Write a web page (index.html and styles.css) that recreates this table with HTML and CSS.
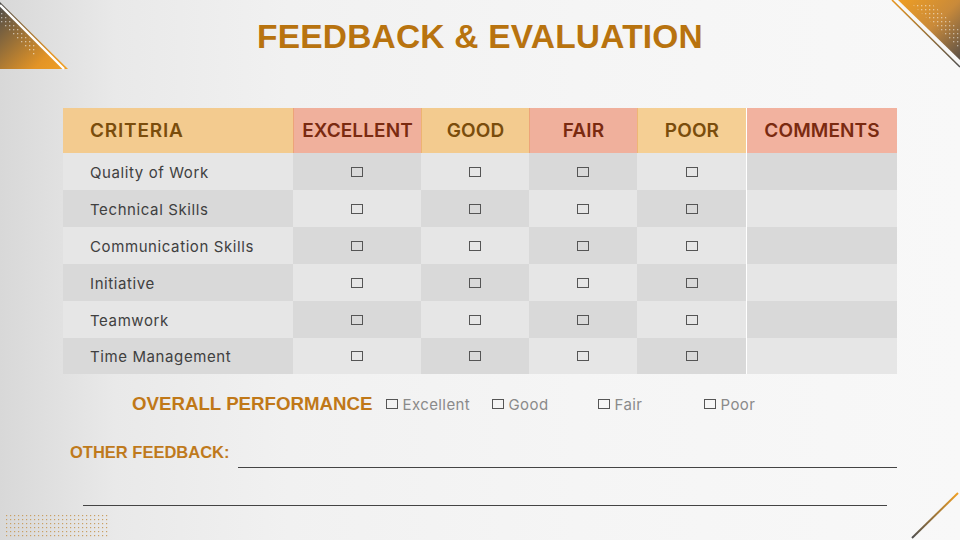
FILE: index.html
```html
<!DOCTYPE html>
<html lang="en">
<head>
<meta charset="utf-8">
<title>Feedback &amp; Evaluation</title>
<link rel="stylesheet" href="styles.css">
</head>
<body>
<div class="slide">
  <svg class="deco deco-tl" width="72" height="72" viewBox="0 0 72 72">
    <defs>
      <linearGradient id="gtl" x1="0" y1="0" x2="1" y2="1">
        <stop offset="0" stop-color="#4a4a4a"/>
        <stop offset="0.75" stop-color="#e39426"/>
        <stop offset="1" stop-color="#f0a024"/>
      </linearGradient>
      <pattern id="dotsW" width="4" height="4" patternUnits="userSpaceOnUse">
        <rect x="1" y="1" width="1.3" height="1.3" fill="#ffffff" opacity="0.55"/>
      </pattern>
    </defs>
    <polygon points="0,2 0,69 68,69" fill="url(#gtl)"/>
    <polygon points="0,9 36,45 36,58 0,22" fill="url(#dotsW)"/>
    <line x1="0" y1="5" x2="64" y2="69" stroke="#ffffff" stroke-width="2.4"/>
  </svg>

  <svg class="deco deco-tr" width="72" height="72" viewBox="0 0 72 72">
    <defs>
      <linearGradient id="gtr" x1="0" y1="0" x2="1" y2="1">
        <stop offset="0" stop-color="#ee9e24"/>
        <stop offset="0.5" stop-color="#c98a3a"/>
        <stop offset="1" stop-color="#5a5048"/>
      </linearGradient>
      <linearGradient id="gtrl" gradientUnits="userSpaceOnUse" x1="4" y1="0" x2="72" y2="68">
        <stop offset="0" stop-color="#e8961e"/>
        <stop offset="1" stop-color="#4e4e4e"/>
      </linearGradient>
      <pattern id="dotsW2" width="4" height="4" patternUnits="userSpaceOnUse">
        <rect x="1" y="1" width="1.3" height="1.3" fill="#ffffff" opacity="0.5"/>
      </pattern>
    </defs>
    <polygon points="10,0 72,0 72,60" fill="url(#gtr)"/>
    <polygon points="24,4 72,50 72,30 44,4" fill="url(#dotsW2)"/>
    <line x1="4" y1="0" x2="72" y2="67" stroke="url(#gtrl)" stroke-width="1.6"/>
  </svg>

  <svg class="deco deco-br" width="55" height="52" viewBox="0 0 55 52">
    <defs>
      <linearGradient id="gbr" gradientUnits="userSpaceOnUse" x1="7" y1="50" x2="53" y2="5">
        <stop offset="0" stop-color="#4e4e4e"/>
        <stop offset="1" stop-color="#f0a024"/>
      </linearGradient>
    </defs>
    <line x1="7" y1="50" x2="53" y2="5" stroke="url(#gbr)" stroke-width="2"/>
  </svg>

  <svg class="deco deco-bl" width="104" height="24" viewBox="0 0 104 24">
    <defs>
      <pattern id="dotsG" width="4" height="4" patternUnits="userSpaceOnUse">
        <rect x="1" y="1" width="1.2" height="1.2" fill="#c9a064"/>
      </pattern>
    </defs>
    <rect x="0" y="0" width="104" height="24" fill="url(#dotsG)"/>
  </svg>

  <h1 class="title">FEEDBACK &amp; EVALUATION</h1>

  <div class="table">
    <div class="th th-criteria hc-amber">CRITERIA</div>
    <div class="th hc-salmon">EXCELLENT</div>
    <div class="th hc-amber">GOOD</div>
    <div class="th hc-salmon">FAIR</div>
    <div class="th hc-amber2">POOR</div>
    <div class="th th-comments hc-salmon2">COMMENTS</div>

    <div class="td label">Quality of Work</div>
    <div class="td dark"><i class="cb"></i></div>
    <div class="td"><i class="cb"></i></div>
    <div class="td dark"><i class="cb"></i></div>
    <div class="td"><i class="cb"></i></div>
    <div class="td comments dark"></div>

    <div class="td label dark">Technical Skills</div>
    <div class="td"><i class="cb"></i></div>
    <div class="td dark"><i class="cb"></i></div>
    <div class="td"><i class="cb"></i></div>
    <div class="td dark"><i class="cb"></i></div>
    <div class="td comments"></div>

    <div class="td label">Communication Skills</div>
    <div class="td dark"><i class="cb"></i></div>
    <div class="td"><i class="cb"></i></div>
    <div class="td dark"><i class="cb"></i></div>
    <div class="td"><i class="cb"></i></div>
    <div class="td comments dark"></div>

    <div class="td label dark">Initiative</div>
    <div class="td"><i class="cb"></i></div>
    <div class="td dark"><i class="cb"></i></div>
    <div class="td"><i class="cb"></i></div>
    <div class="td dark"><i class="cb"></i></div>
    <div class="td comments"></div>

    <div class="td label">Teamwork</div>
    <div class="td dark"><i class="cb"></i></div>
    <div class="td"><i class="cb"></i></div>
    <div class="td dark"><i class="cb"></i></div>
    <div class="td"><i class="cb"></i></div>
    <div class="td comments dark"></div>

    <div class="td label dark">Time Management</div>
    <div class="td"><i class="cb"></i></div>
    <div class="td dark"><i class="cb"></i></div>
    <div class="td"><i class="cb"></i></div>
    <div class="td dark"><i class="cb"></i></div>
    <div class="td comments"></div>
  </div>

  <div class="overall">
    <span class="overall-label">OVERALL PERFORMANCE</span>
    <span class="opt"><i class="ob"></i>Excellent</span>
    <span class="opt"><i class="ob"></i>Good</span>
    <span class="opt"><i class="ob"></i>Fair</span>
    <span class="opt"><i class="ob"></i>Poor</span>
  </div>

  <div class="other">
    <span class="other-label">OTHER FEEDBACK:</span>
    <span class="fill-line"></span>
  </div>
  <div class="line2"></div>
</div>
</body>
</html>
```

FILE: styles.css
```css
* { box-sizing: border-box; }

html, body {
  margin: 0;
  padding: 0;
}

body {
  width: 960px;
  height: 540px;
  overflow: hidden;
  font-family: "Inter", "Liberation Sans", sans-serif;
}

.slide {
  position: relative;
  width: 960px;
  height: 540px;
  overflow: hidden;
  display: flex;
  flex-direction: column;
  background: linear-gradient(90deg, #d8d8d8 0%, #e9e9e9 12%, #f1f1f1 30%, #f5f5f5 60%, #f8f8f8 100%);
}

.deco { position: absolute; display: block; }
.deco-tl { left: 0; top: 0; }
.deco-tr { left: 888px; top: 0; }
.deco-br { left: 905px; top: 488px; }
.deco-bl { left: 5px; top: 514px; }

.title {
  margin: 0;
  padding-top: 17px;
  font-family: "Liberation Sans", Arial, sans-serif;
  font-weight: 700;
  font-size: 33.5px;
  letter-spacing: 0.2px;
  line-height: 40px;
  text-align: center;
  color: #b8730f;
}

.table {
  margin: 51px 0 0 63px;
  width: 834px;
  display: grid;
  grid-template-columns: 230px 128px 108px 108px 109px 151px;
  grid-template-rows: 45px 37px 37px 37px 37px 37px 36px;
}

.th {
  display: flex;
  align-items: center;
  justify-content: center;
  font-family: "Inter", sans-serif;
  font-weight: 600;
  font-size: 19px;
  letter-spacing: 0.1px;
  border-left: 1px solid rgba(232, 150, 80, 0.45);
}
.th-criteria {
  justify-content: flex-start;
  padding-left: 27px;
  border-left: none;
  letter-spacing: 0.8px;
}
.th-comments { border-left: 1px solid #ffffff; }

.hc-amber { background: #f3cb8f; color: #7a4d0c; }
.hc-amber2 { background: #f5cf94; color: #7a4d0c; }
.hc-salmon { background: #f0b09c; color: #7a2a10; }
.hc-salmon2 { background: #f2b29f; color: #7a2a10; }

.td {
  display: flex;
  align-items: center;
  justify-content: center;
  background: #e6e6e6;
}
.td.dark { background: #d9d9d9; }
.td.label {
  justify-content: flex-start;
  padding-left: 27px;
  padding-top: 1px;
  font-size: 15px;
  letter-spacing: 0.6px;
  color: #404040;
}
.td.comments { border-left: 1px solid #ffffff; }

.cb {
  display: block;
  width: 12px;
  height: 10px;
  border: 1.5px solid #555555;
}

.overall {
  margin: 16px 0 0 132px;
  height: 28px;
  display: flex;
  align-items: center;
}
.overall-label {
  font-family: "Liberation Sans", Arial, sans-serif;
  font-weight: 700;
  font-size: 18.7px;
  line-height: 28px;
  color: #c07818;
  margin-right: 13px;
}
.opt {
  width: 106px;
  display: flex;
  align-items: center;
  font-size: 15px;
  letter-spacing: 0.4px;
  color: #8a8a8a;
}
.ob {
  display: block;
  width: 12px;
  height: 10px;
  border: 1px solid #555555;
  margin-right: 5px;
}

.other {
  margin: 24px 0 0 70px;
  width: 827px;
  display: flex;
  align-items: flex-start;
}
.other-label {
  font-family: "Liberation Sans", Arial, sans-serif;
  font-weight: 700;
  font-size: 16.5px;
  line-height: 20px;
  color: #bf7a1c;
  margin-right: 8px;
}
.fill-line {
  flex: 1;
  height: 26px;
  border-bottom: 1px solid #444444;
}

.line2 {
  margin: 37px 0 0 83px;
  width: 804px;
  height: 0;
  border-top: 1px solid #444444;
}
```
